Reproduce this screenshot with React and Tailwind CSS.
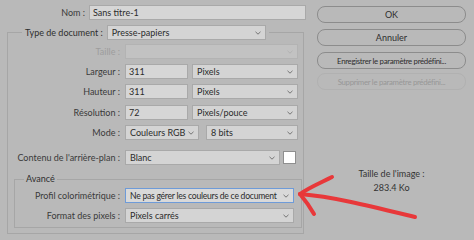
import React from 'react';

function Chevron({ light }) {
  return (
    <svg width="6" height="4" viewBox="0 0 6 4" className="shrink-0">
      <path d="M0.5 0.8 L3 3.2 L5.5 0.8" fill="none" stroke={light ? '#b0b0b0' : '#6a6a6a'} strokeWidth="0.9" />
    </svg>
  );
}

function Select({ value, className = '', textClass = '', disabled, focus }) {
  return (
    <div
      className={`h-[15px] flex items-center justify-between pl-[4px] pr-[4px] border ${
        focus ? 'border-[#6e9bd8] bg-[#d9d9d9]' : disabled ? 'border-[#b3b3b3] bg-[#c2c2c2]' : 'border-[#a9a9a9] bg-[#d4d4d4]'
      } ${className}`}
    >
      <span className={`whitespace-nowrap ${textClass}`}>{value}</span>
      <Chevron light={disabled} />
    </div>
  );
}

function Field({ value, className = '' }) {
  return (
    <div className={`h-[15px] flex items-center pl-[3px] border border-[#a9a9a9] bg-[#d6d6d6] ${className}`}>
      {value}
    </div>
  );
}

function Row({ label, labelWidth, disabled, className = '', children }) {
  return (
    <div className={`flex items-center h-[15px] ${className}`}>
      <span className={`${labelWidth} shrink-0 text-right pr-[5px] ${disabled ? 'text-[#9d9d9d]' : 'text-[#3a3a3a]'}`}>
        {label}
      </span>
      {children}
    </div>
  );
}

function Button({ children, disabled, className = '' }) {
  return (
    <div
      className={`h-[17px] flex items-center justify-center rounded-[8px] border whitespace-nowrap ${
        disabled ? 'border-[#b1b1b1] text-[#979797]' : 'border-[#8c8c8c] text-[#2e2e2e]'
      } ${className}`}
    >
      {children}
    </div>
  );
}

export default function App() {
  return (
    <div
      className="relative w-[474px] h-[240px] overflow-hidden bg-[#b9b9b9] flex text-[9px] leading-[12px] text-[#2b2b2b]"
      style={{ fontFamily: 'Lato, "Open Sans", sans-serif' }}
    >
      {/* Left: form */}
      <div className="w-[310px] shrink-0 pt-[5px]">
        <div className="flex items-center h-[15px]">
          <span className="w-[89px] shrink-0 text-right pr-[4px] text-[#3a3a3a]">Nom :</span>
          <Field value="Sans titre-1" className="w-[217px]" />
        </div>

        <fieldset className="ml-[7px] mt-[5px] w-[297px] border border-[#a6a6a6] pb-[5px]">
          <legend className="ml-[14px] px-[3px]">
            <div className="flex items-center h-[15px]">
              <span className="pr-[4px] text-[#2e2e2e]">Type de document :</span>
              <Select value="Presse-papiers" className="w-[159px]" />
            </div>
          </legend>

          <Row label="Taille :" labelWidth="w-[117px]" disabled className="mt-[4px]">
            <Select value="" disabled className="w-[173px]" />
          </Row>
          <Row label="Largeur :" labelWidth="w-[117px]" className="mt-[5px]">
            <Field value="311" className="w-[63px]" />
            <Select value="Pixels" className="ml-[4px] w-[106px]" />
          </Row>
          <Row label="Hauteur :" labelWidth="w-[117px]" className="mt-[5px]">
            <Field value="311" className="w-[63px]" />
            <Select value="Pixels" className="ml-[4px] w-[106px]" />
          </Row>
          <Row label="Résolution :" labelWidth="w-[117px]" className="mt-[6px]">
            <Field value="72" className="w-[63px]" />
            <Select value="Pixels/pouce" className="ml-[4px] w-[106px]" />
          </Row>
          <Row label="Mode :" labelWidth="w-[117px]" className="mt-[5px]">
            <Select value="Couleurs RGB" className="w-[74px]" />
            <Select value="8 bits" className="ml-[7px] w-[92px]" />
          </Row>
          <Row label="Contenu de l'arrière-plan :" labelWidth="w-[117px]" className="mt-[10px]">
            <Select value="Blanc" className="w-[155px]" />
            <div className="ml-[3px] w-[13px] h-[13px] bg-white border border-[#8f8f8f]" />
          </Row>

          <fieldset className="ml-[6px] mt-[8px] w-[288px] border border-[#a6a6a6] pb-[4px]">
            <legend className="ml-[9px] px-[2px] text-[#2e2e2e]">Avancé</legend>
            <Row label="Profil colorimétrique :" labelWidth="w-[110px]" className="mt-[3px]">
              <Select
                value="Ne pas gérer les couleurs de ce document"
                focus
                textClass="text-[8.6px] tracking-[-0.25px]"
                className="w-[169px] pl-[3px]"
              />
            </Row>
            <Row label="Format des pixels :" labelWidth="w-[110px]" className="mt-[5px]">
              <Select value="Pixels carrés" className="w-[169px]" />
            </Row>
          </fieldset>
        </fieldset>
      </div>

      {/* Right: buttons and size */}
      <div className="w-[149px] ml-[7px] pt-[6px] flex flex-col">
        <Button>OK</Button>
        <Button className="mt-[6px]">Annuler</Button>
        <Button className="mt-[6px] text-[7.8px] tracking-[-0.3px]">Enregistrer le paramètre prédéfini...</Button>
        <Button disabled className="mt-[4px] h-[16px] text-[7.8px] tracking-[-0.3px]">Supprimer le paramètre prédéfini...</Button>
        <div className="mt-[78px] text-center text-[#333]">Taille de l'image :</div>
        <div className="mt-[2px] text-center text-[#333]">283.4 Ko</div>
      </div>

      {/* Red annotation arrow */}
      <svg className="absolute inset-0 pointer-events-none" width="474" height="240" viewBox="0 0 474 240">
        <g fill="none" stroke="#e8383a" strokeWidth="4" strokeLinecap="round" strokeLinejoin="round">
          <path d="M300 194 C 335 197, 370 206, 415 217" />
          <path d="M332 177 C 320 183, 308 188, 300 194" />
          <path d="M300 194 C 305 200, 310 207, 314 214" />
        </g>
      </svg>
    </div>
  );
}
